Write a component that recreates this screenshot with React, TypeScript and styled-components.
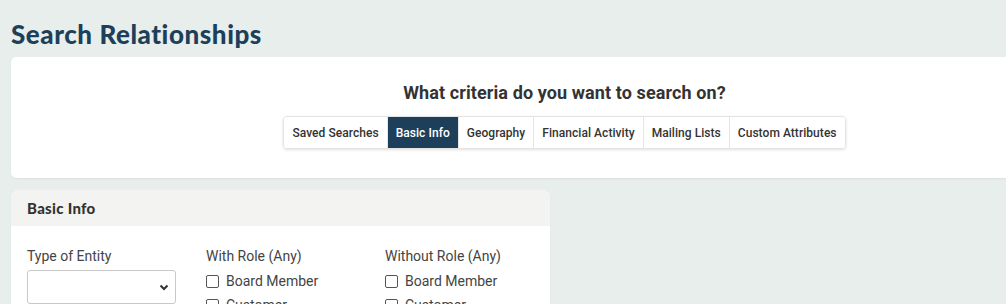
import React from 'react';
import styled, { createGlobalStyle } from 'styled-components';

const GlobalStyle = createGlobalStyle`
  html, body {
    margin: 0;
    padding: 0;
    overflow: hidden;
    background: #e8eeeb;
  }
  body {
    font-family: Roboto, "Liberation Sans", Arial, sans-serif;
    color: #333;
  }
`;

const Page = styled.div`
  width: 1107px;
  padding: 0 0 0 11px;
`;

const PageTitle = styled.h1`
  font-family: Lato, "Noto Sans", sans-serif;
  font-weight: 900;
  font-size: 26px;
  line-height: 30px;
  color: #1d3f5a;
  margin: 19px 0 8px;
  letter-spacing: 0.55px;
`;

const Card = styled.div`
  background: #fff;
  border-radius: 5px;
  box-shadow: 0 1px 2px rgba(0, 0, 0, 0.06);
`;

const CriteriaCard = styled(Card)`
  padding: 24px 0 29px;
  display: flex;
  flex-direction: column;
  align-items: center;
  gap: 12px;
`;

const CriteriaHeading = styled.h2`
  margin: 0;
  font-size: 18px;
  line-height: 23px;
  font-weight: 700;
  letter-spacing: 0.1px;
  color: #333;
`;

const TabGroup = styled.div`
  display: flex;
  border: 1px solid #e3e3e3;
  border-radius: 4px;
  overflow: hidden;
  box-shadow: 0 1px 3px rgba(0, 0, 0, 0.12);
`;

const Tab = styled.button<{ $active?: boolean }>`
  font-family: Roboto, "Liberation Sans", sans-serif;
  font-size: 12px;
  font-weight: 500;
  height: 31px;
  padding: 0 8px;
  border: none;
  border-left: 1px solid #e6e6e6;
  background: ${(p) => (p.$active ? '#1d3f5a' : '#fff')};
  color: ${(p) => (p.$active ? '#fff' : '#333')};
  letter-spacing: 0.05px;
  cursor: pointer;
  &:first-child {
    border-left: none;
  }
`;

const Columns = styled.div`
  display: grid;
  grid-template-columns: 539px 539px;
  gap: 29px;
  margin-top: 12px;
  align-items: start;
`;

const Panel = styled.div`
  background: #fff;
  border-radius: 8px;
  overflow: hidden;
  box-shadow: 0 1px 2px rgba(0, 0, 0, 0.05);
`;

const PanelHeader = styled.div`
  background: #f3f3f1;
  height: 36px;
  display: flex;
  align-items: center;
  padding: 0 16px;
  font-family: Lato, "Noto Sans", sans-serif;
  font-weight: 900;
  font-size: 15px;
  letter-spacing: 0.3px;
  color: #333;
`;

const PanelBody = styled.div`
  display: grid;
  grid-template-columns: 179px 179px 179px;
  padding: 22px 16px 20px;
`;

const Field = styled.div`
  display: flex;
  flex-direction: column;
`;

const FieldLabel = styled.div`
  font-size: 14px;
  line-height: 17px;
  color: #444;
  margin-bottom: 4px;
`;

const SelectBox = styled.div`
  width: 149px;
  height: 34px;
  margin-top: 1px;
  box-sizing: border-box;
  border: 1px solid #c9c9c9;
  border-radius: 3px;
  display: flex;
  align-items: center;
  justify-content: flex-end;
  padding-right: 5px;
  color: #333;
`;

const CheckRow = styled.label`
  display: flex;
  align-items: center;
  gap: 7px;
  font-size: 14px;
  line-height: 17px;
  color: #444;
  height: 24px;
`;

const CheckBox = styled.span`
  width: 13px;
  height: 13px;
  box-sizing: border-box;
  border: 1px solid #555;
  border-radius: 2px;
  flex-shrink: 0;
`;

const tabs = ['Saved Searches', 'Basic Info', 'Geography', 'Financial Activity', 'Mailing Lists', 'Custom Attributes'];
const roles = ['Board Member', 'Customer', 'Donor'];

const Chevron = () => (
  <svg width="12" height="12" viewBox="0 0 12 12">
    <path d="M2.5 4.5 L6 8 L9.5 4.5" fill="none" stroke="#333" strokeWidth="2" />
  </svg>
);

export default function App() {
  return (
    <Page>
      <GlobalStyle />
      <PageTitle>Search Relationships</PageTitle>
      <CriteriaCard>
        <CriteriaHeading>What criteria do you want to search on?</CriteriaHeading>
        <TabGroup>
          {tabs.map((t) => (
            <Tab key={t} $active={t === 'Basic Info'}>{t}</Tab>
          ))}
        </TabGroup>
      </CriteriaCard>
      <Columns>
        <Panel>
          <PanelHeader>Basic Info</PanelHeader>
          <PanelBody>
            <Field>
              <FieldLabel>Type of Entity</FieldLabel>
              <SelectBox><Chevron /></SelectBox>
            </Field>
            <Field>
              <FieldLabel>With Role (Any)</FieldLabel>
              {roles.map((r) => (
                <CheckRow key={r}><CheckBox />{r}</CheckRow>
              ))}
            </Field>
            <Field>
              <FieldLabel>Without Role (Any)</FieldLabel>
              {roles.map((r) => (
                <CheckRow key={r}><CheckBox />{r}</CheckRow>
              ))}
            </Field>
          </PanelBody>
        </Panel>
      </Columns>
    </Page>
  );
}
